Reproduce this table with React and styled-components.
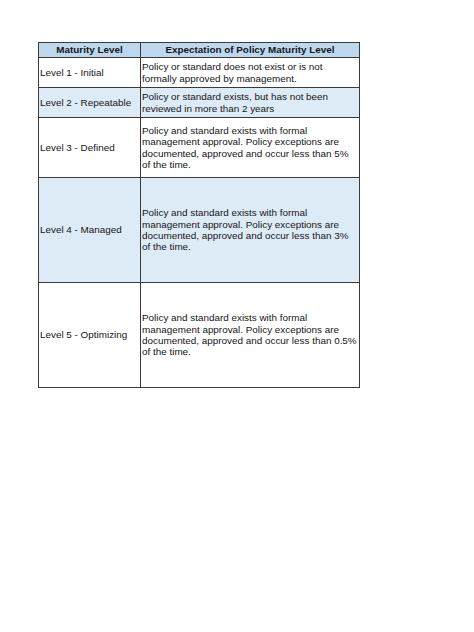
import React from "react";
import styled, { createGlobalStyle } from "styled-components";

const GlobalStyle = createGlobalStyle`
  html, body {
    margin: 0;
    padding: 0;
    background: #ffffff;
  }
`;

const Page = styled.div`
  width: 474px;
  height: 632px;
  padding: 42px 0 0 38px;
  box-sizing: border-box;
  font-family: "Liberation Sans", Arial, sans-serif;
  color: #151515;
`;

const Table = styled.table`
  border-collapse: collapse;
  width: 319px;
  table-layout: fixed;
  font-size: 9.9px;
  line-height: 11.3px;
`;

const HeadCell = styled.th`
  background: #bdd7ee;
  border: 1px solid #3a3a3a;
  height: 14px;
  padding: 0;
  font-weight: bold;
  text-align: center;
  vertical-align: middle;
  width: ${(p) => p.w}px;
`;

const Row = styled.tr`
  height: ${(p) => p.h}px;
  background: ${(p) => (p.shaded ? "#ddebf7" : "#ffffff")};
`;

const Cell = styled.td`
  border: 1px solid #3a3a3a;
  padding: 0 0 0 1px;
  vertical-align: middle;
  white-space: nowrap;
`;

const Line = styled.span`
  display: block;
`;

const rows = [
  { level: "Level 1 - Initial", h: 30, lines: ["Policy or standard does not exist or is not", "formally approved by management."] },
  { level: "Level 2 - Repeatable", h: 30, shaded: true, lines: ["Policy or standard exists, but has not been", "reviewed in more than 2 years"] },
  { level: "Level 3 - Defined", h: 60, lines: ["Policy and standard exists with formal", "management approval. Policy exceptions are", "documented, approved and occur less than 5%", "of the time."] },
  { level: "Level 4 - Managed", h: 105, shaded: true, lines: ["Policy and standard exists with formal", "management approval. Policy exceptions are", "documented, approved and occur less than 3%", "of the time."] },
  { level: "Level 5 - Optimizing", h: 105, lines: ["Policy and standard exists with formal", "management approval. Policy exceptions are", "documented, approved and occur less than 0.5%", "of the time."] },
];

export default function App() {
  return (
    <Page>
      <GlobalStyle />
      <Table>
        <thead>
          <tr>
            <HeadCell w={101}>Maturity Level</HeadCell>
            <HeadCell w={218}>Expectation of Policy Maturity Level</HeadCell>
          </tr>
        </thead>
        <tbody>
          {rows.map((r) => (
            <Row key={r.level} h={r.h} shaded={r.shaded}>
              <Cell>{r.level}</Cell>
              <Cell>
                {r.lines.map((l) => (
                  <Line key={l}>{l}</Line>
                ))}
              </Cell>
            </Row>
          ))}
        </tbody>
      </Table>
    </Page>
  );
}
